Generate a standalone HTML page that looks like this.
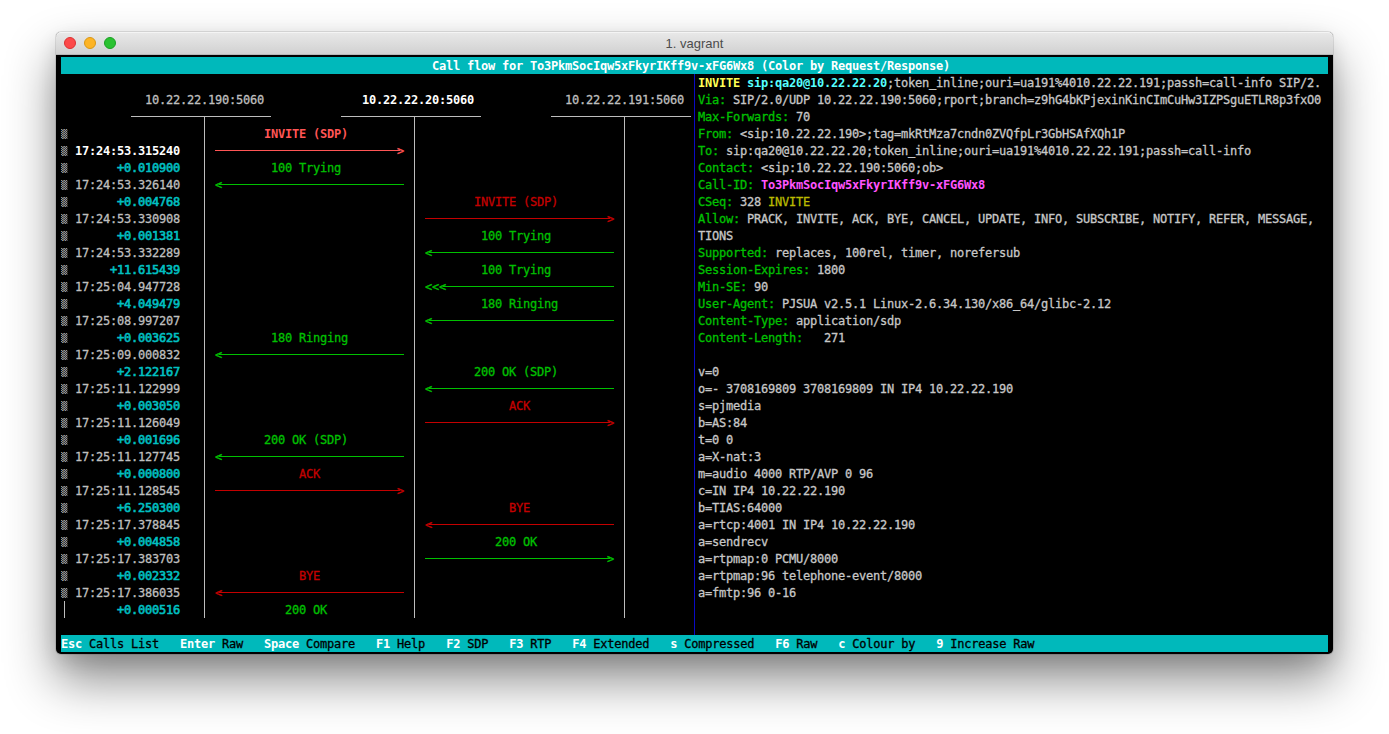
<!DOCTYPE html>
<html lang="en"><head><meta charset="utf-8"><title>1. vagrant</title>
<style>
html,body{margin:0;padding:0;}
body{width:1389px;height:734px;background:#fff;position:relative;overflow:hidden;}
#win{position:absolute;left:56px;top:32px;width:1277px;height:622px;background:#000;border-radius:5px;
 box-shadow:0 0 0 1px rgba(0,0,0,.10), 0 26px 50px rgba(0,0,0,.46), 0 8px 20px rgba(0,0,0,.11);}
#tb{position:absolute;left:56px;top:32px;width:1277px;height:23px;border-radius:5px 5px 0 0;
 background:linear-gradient(#e9e9e9,#d0d0d0);box-shadow:inset 0 1px 0 #f4f4f4, inset 0 -1px 0 #b8b8b8;
 font:13px/24px "Liberation Sans","DejaVu Sans",sans-serif;color:#4c4c4c;text-align:center;}
.dot{position:absolute;top:37px;width:12px;height:12px;border-radius:50%;box-sizing:border-box;}
.t{position:absolute;white-space:pre;font:12px/17px "DejaVu Sans Mono","Liberation Mono",monospace;letter-spacing:-0.224px;color:#c7c7c7;height:17px;-webkit-text-stroke:0.3px;}
.b{position:absolute;}
.sb{position:absolute;margin-left:-0.5px;font:9px/12px "DejaVu Sans Mono","Liberation Mono",monospace;color:#b4b4b4;transform:scaleX(1.29);transform-origin:0 0;height:12px;overflow:hidden}
.bar{position:absolute;background:#00b9bb;}
.W{color:#fff;font-weight:bold;-webkit-text-stroke:0}
.B{font-weight:bold;-webkit-text-stroke:0}
.g{color:#bfbfbf}
.k{color:#000}
.c{color:#00c0c2;-webkit-text-stroke:0.6px}
.r{color:#c40000}
.R{color:#ff5555}
.n{color:#00c000}
.Y{color:#ffff55;font-weight:bold;-webkit-text-stroke:0}
.y{color:#bbbb00}
.C{color:#55ffff;font-weight:bold;-webkit-text-stroke:0}
.M{color:#ff55ff;font-weight:bold;-webkit-text-stroke:0}
</style></head><body>
<div id="win"></div>
<div id="tb">1. vagrant</div>
<div class="dot" style="left:64px;background:#fc4949;border:1px solid #dc3131"></div>
<div class="dot" style="left:84px;background:#fdb425;border:1px solid #da9714"></div>
<div class="dot" style="left:104px;background:#2ac231;border:1px solid #1aa023"></div>
<div class="bar" style="left:61px;top:57px;width:1267px;height:17px"></div>
<div class="t" style="left:432px;top:58px"><span class="W">Call flow for To3PkmSocIqw5xFkyrIKff9v-xFG6Wx8 (Color by Request/Response)</span></div>
<div class="bar" style="left:61px;top:635px;width:1267px;height:17px"></div>
<div class="t" style="left:61px;top:636px"><span class="W">Esc</span><span class="k"> Calls List   </span><span class="W">Enter</span><span class="k"> Raw   </span><span class="W">Space</span><span class="k"> Compare   </span><span class="W">F1</span><span class="k"> Help   </span><span class="W">F2</span><span class="k"> SDP   </span><span class="W">F3</span><span class="k"> RTP   </span><span class="W">F4</span><span class="k"> Extended   </span><span class="W">s</span><span class="k"> Compressed   </span><span class="W">F6</span><span class="k"> Raw   </span><span class="W">c</span><span class="k"> Colour by   </span><span class="W">9</span><span class="k"> Increase Raw</span></div>
<div class="t" style="left:145px;top:92px"><span class="g">10.22.22.190:5060</span></div>
<div class="t" style="left:362px;top:92px"><span class="W">10.22.22.20:5060</span></div>
<div class="t" style="left:565px;top:92px"><span class="g">10.22.22.191:5060</span></div>
<div class="b " style="left:131px;top:116px;width:140px;height:1px;background:#bdbdbd"></div>
<div class="b " style="left:341px;top:116px;width:140px;height:1px;background:#bdbdbd"></div>
<div class="b " style="left:551px;top:116px;width:140px;height:1px;background:#bdbdbd"></div>
<div class="b " style="left:204px;top:116px;width:1px;height:502px;background:#bdbdbd"></div>
<div class="b " style="left:414px;top:116px;width:1px;height:502px;background:#bdbdbd"></div>
<div class="b " style="left:624px;top:116px;width:1px;height:502px;background:#bdbdbd"></div>
<div class="b " style="left:694px;top:74px;width:1px;height:561px;background:#0a0ac4"></div>
<div class="sb" style="left:61px;top:128px">▒</div>
<div class="sb" style="left:61px;top:145px">▒</div>
<div class="sb" style="left:61px;top:162px">▒</div>
<div class="sb" style="left:61px;top:179px">▒</div>
<div class="sb" style="left:61px;top:196px">▒</div>
<div class="sb" style="left:61px;top:213px">▒</div>
<div class="sb" style="left:61px;top:230px">▒</div>
<div class="sb" style="left:61px;top:247px">▒</div>
<div class="sb" style="left:61px;top:264px">▒</div>
<div class="sb" style="left:61px;top:281px">▒</div>
<div class="sb" style="left:61px;top:298px">▒</div>
<div class="sb" style="left:61px;top:315px">▒</div>
<div class="sb" style="left:61px;top:332px">▒</div>
<div class="sb" style="left:61px;top:349px">▒</div>
<div class="sb" style="left:61px;top:366px">▒</div>
<div class="sb" style="left:61px;top:383px">▒</div>
<div class="sb" style="left:61px;top:400px">▒</div>
<div class="sb" style="left:61px;top:417px">▒</div>
<div class="sb" style="left:61px;top:434px">▒</div>
<div class="sb" style="left:61px;top:451px">▒</div>
<div class="sb" style="left:61px;top:468px">▒</div>
<div class="sb" style="left:61px;top:485px">▒</div>
<div class="sb" style="left:61px;top:502px">▒</div>
<div class="sb" style="left:61px;top:519px">▒</div>
<div class="sb" style="left:61px;top:536px">▒</div>
<div class="sb" style="left:61px;top:553px">▒</div>
<div class="sb" style="left:61px;top:570px">▒</div>
<div class="sb" style="left:61px;top:587px">▒</div>
<div class="b " style="left:64px;top:601px;width:1px;height:17px;background:#bdbdbd"></div>
<div class="t" style="left:264px;top:126px"><span class="R B">INVITE (SDP)</span></div>
<div class="t" style="left:75px;top:143px"><span class="W">17:24:53.315240</span></div>
<div class="b " style="left:215px;top:150px;width:185px;height:1px;background:#ff5555"></div>
<div class="t" style="left:397px;top:143px"><span class="R">&gt;</span></div>
<div class="t" style="left:117px;top:160px"><span class="c">+0.010900</span></div>
<div class="t" style="left:271px;top:160px"><span class="n">100 Trying</span></div>
<div class="t" style="left:75px;top:177px"><span class="g">17:24:53.326140</span></div>
<div class="b " style="left:219px;top:184px;width:185px;height:1px;background:#00c000"></div>
<div class="t" style="left:215px;top:177px"><span class="n">&lt;</span></div>
<div class="t" style="left:117px;top:194px"><span class="c">+0.004768</span></div>
<div class="t" style="left:474px;top:194px"><span class="r">INVITE (SDP)</span></div>
<div class="t" style="left:75px;top:211px"><span class="g">17:24:53.330908</span></div>
<div class="b " style="left:425px;top:218px;width:185px;height:1px;background:#c40000"></div>
<div class="t" style="left:607px;top:211px"><span class="r">&gt;</span></div>
<div class="t" style="left:117px;top:228px"><span class="c">+0.001381</span></div>
<div class="t" style="left:481px;top:228px"><span class="n">100 Trying</span></div>
<div class="t" style="left:75px;top:245px"><span class="g">17:24:53.332289</span></div>
<div class="b " style="left:429px;top:252px;width:185px;height:1px;background:#00c000"></div>
<div class="t" style="left:425px;top:245px"><span class="n">&lt;</span></div>
<div class="t" style="left:110px;top:262px"><span class="c">+11.615439</span></div>
<div class="t" style="left:481px;top:262px"><span class="n">100 Trying</span></div>
<div class="t" style="left:75px;top:279px"><span class="g">17:25:04.947728</span></div>
<div class="b " style="left:443px;top:286px;width:171px;height:1px;background:#00c000"></div>
<div class="t" style="left:425px;top:279px"><span class="n">&lt;&lt;&lt;</span></div>
<div class="t" style="left:117px;top:296px"><span class="c">+4.049479</span></div>
<div class="t" style="left:481px;top:296px"><span class="n">180 Ringing</span></div>
<div class="t" style="left:75px;top:313px"><span class="g">17:25:08.997207</span></div>
<div class="b " style="left:429px;top:320px;width:185px;height:1px;background:#00c000"></div>
<div class="t" style="left:425px;top:313px"><span class="n">&lt;</span></div>
<div class="t" style="left:117px;top:330px"><span class="c">+0.003625</span></div>
<div class="t" style="left:271px;top:330px"><span class="n">180 Ringing</span></div>
<div class="t" style="left:75px;top:347px"><span class="g">17:25:09.000832</span></div>
<div class="b " style="left:219px;top:354px;width:185px;height:1px;background:#00c000"></div>
<div class="t" style="left:215px;top:347px"><span class="n">&lt;</span></div>
<div class="t" style="left:117px;top:364px"><span class="c">+2.122167</span></div>
<div class="t" style="left:474px;top:364px"><span class="n">200 OK (SDP)</span></div>
<div class="t" style="left:75px;top:381px"><span class="g">17:25:11.122999</span></div>
<div class="b " style="left:429px;top:388px;width:185px;height:1px;background:#00c000"></div>
<div class="t" style="left:425px;top:381px"><span class="n">&lt;</span></div>
<div class="t" style="left:117px;top:398px"><span class="c">+0.003050</span></div>
<div class="t" style="left:509px;top:398px"><span class="r">ACK</span></div>
<div class="t" style="left:75px;top:415px"><span class="g">17:25:11.126049</span></div>
<div class="b " style="left:425px;top:422px;width:185px;height:1px;background:#c40000"></div>
<div class="t" style="left:607px;top:415px"><span class="r">&gt;</span></div>
<div class="t" style="left:117px;top:432px"><span class="c">+0.001696</span></div>
<div class="t" style="left:264px;top:432px"><span class="n">200 OK (SDP)</span></div>
<div class="t" style="left:75px;top:449px"><span class="g">17:25:11.127745</span></div>
<div class="b " style="left:219px;top:456px;width:185px;height:1px;background:#00c000"></div>
<div class="t" style="left:215px;top:449px"><span class="n">&lt;</span></div>
<div class="t" style="left:117px;top:466px"><span class="c">+0.000800</span></div>
<div class="t" style="left:299px;top:466px"><span class="r">ACK</span></div>
<div class="t" style="left:75px;top:483px"><span class="g">17:25:11.128545</span></div>
<div class="b " style="left:215px;top:490px;width:185px;height:1px;background:#c40000"></div>
<div class="t" style="left:397px;top:483px"><span class="r">&gt;</span></div>
<div class="t" style="left:117px;top:500px"><span class="c">+6.250300</span></div>
<div class="t" style="left:509px;top:500px"><span class="r">BYE</span></div>
<div class="t" style="left:75px;top:517px"><span class="g">17:25:17.378845</span></div>
<div class="b " style="left:429px;top:524px;width:185px;height:1px;background:#c40000"></div>
<div class="t" style="left:425px;top:517px"><span class="r">&lt;</span></div>
<div class="t" style="left:117px;top:534px"><span class="c">+0.004858</span></div>
<div class="t" style="left:495px;top:534px"><span class="n">200 OK</span></div>
<div class="t" style="left:75px;top:551px"><span class="g">17:25:17.383703</span></div>
<div class="b " style="left:425px;top:558px;width:185px;height:1px;background:#00c000"></div>
<div class="t" style="left:607px;top:551px"><span class="n">&gt;</span></div>
<div class="t" style="left:117px;top:568px"><span class="c">+0.002332</span></div>
<div class="t" style="left:299px;top:568px"><span class="r">BYE</span></div>
<div class="t" style="left:75px;top:585px"><span class="g">17:25:17.386035</span></div>
<div class="b " style="left:219px;top:592px;width:185px;height:1px;background:#c40000"></div>
<div class="t" style="left:215px;top:585px"><span class="r">&lt;</span></div>
<div class="t" style="left:117px;top:602px"><span class="c">+0.000516</span></div>
<div class="t" style="left:285px;top:602px"><span class="n">200 OK</span></div>
<div class="t" style="left:698px;top:75px"><span class="Y">INVITE</span> <span class="C">sip:qa20@10.22.22.20</span>;token_inline;ouri=ua191%4010.22.22.191;passh=call-info SIP/2.</div>
<div class="t" style="left:698px;top:92px"><span class="n">Via:</span> SIP/2.0/UDP 10.22.22.190:5060;rport;branch=z9hG4bKPjexinKinCImCuHw3IZPSguETLR8p3fxO0</div>
<div class="t" style="left:698px;top:109px"><span class="n">Max-Forwards:</span> 70</div>
<div class="t" style="left:698px;top:126px"><span class="n">From:</span> &lt;sip:10.22.22.190&gt;;tag=mkRtMza7cndn0ZVQfpLr3GbHSAfXQh1P</div>
<div class="t" style="left:698px;top:143px"><span class="n">To:</span> sip:qa20@10.22.22.20;token_inline;ouri=ua191%4010.22.22.191;passh=call-info</div>
<div class="t" style="left:698px;top:160px"><span class="n">Contact:</span> &lt;sip:10.22.22.190:5060;ob&gt;</div>
<div class="t" style="left:698px;top:177px"><span class="n">Call-ID:</span> <span class="M">To3PkmSocIqw5xFkyrIKff9v-xFG6Wx8</span></div>
<div class="t" style="left:698px;top:194px"><span class="n">CSeq:</span> 328 <span class="y">INVITE</span></div>
<div class="t" style="left:698px;top:211px"><span class="n">Allow:</span> PRACK, INVITE, ACK, BYE, CANCEL, UPDATE, INFO, SUBSCRIBE, NOTIFY, REFER, MESSAGE,</div>
<div class="t" style="left:698px;top:228px">TIONS</div>
<div class="t" style="left:698px;top:245px"><span class="n">Supported:</span> replaces, 100rel, timer, norefersub</div>
<div class="t" style="left:698px;top:262px"><span class="n">Session-Expires:</span> 1800</div>
<div class="t" style="left:698px;top:279px"><span class="n">Min-SE:</span> 90</div>
<div class="t" style="left:698px;top:296px"><span class="n">User-Agent:</span> PJSUA v2.5.1 Linux-2.6.34.130/x86_64/glibc-2.12</div>
<div class="t" style="left:698px;top:313px"><span class="n">Content-Type:</span> application/sdp</div>
<div class="t" style="left:698px;top:330px"><span class="n">Content-Length:</span>   271</div>
<div class="t" style="left:698px;top:364px">v=0</div>
<div class="t" style="left:698px;top:381px">o=- 3708169809 3708169809 IN IP4 10.22.22.190</div>
<div class="t" style="left:698px;top:398px">s=pjmedia</div>
<div class="t" style="left:698px;top:415px">b=AS:84</div>
<div class="t" style="left:698px;top:432px">t=0 0</div>
<div class="t" style="left:698px;top:449px">a=X-nat:3</div>
<div class="t" style="left:698px;top:466px">m=audio 4000 RTP/AVP 0 96</div>
<div class="t" style="left:698px;top:483px">c=IN IP4 10.22.22.190</div>
<div class="t" style="left:698px;top:500px">b=TIAS:64000</div>
<div class="t" style="left:698px;top:517px">a=rtcp:4001 IN IP4 10.22.22.190</div>
<div class="t" style="left:698px;top:534px">a=sendrecv</div>
<div class="t" style="left:698px;top:551px">a=rtpmap:0 PCMU/8000</div>
<div class="t" style="left:698px;top:568px">a=rtpmap:96 telephone-event/8000</div>
<div class="t" style="left:698px;top:585px">a=fmtp:96 0-16</div>
</body></html>
